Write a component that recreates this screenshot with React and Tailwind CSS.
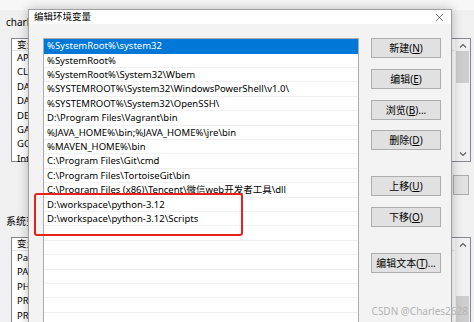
import { X } from 'lucide-react';

const FONT = "font-['Noto_Sans','Noto_Sans_CJK_SC',sans-serif]";

const PATHS = [
  '%SystemRoot%\\system32',
  '%SystemRoot%',
  '%SystemRoot%\\System32\\Wbem',
  '%SYSTEMROOT%\\System32\\WindowsPowerShell\\v1.0\\',
  '%SYSTEMROOT%\\System32\\OpenSSH\\',
  'D:\\Program Files\\Vagrant\\bin',
  '%JAVA_HOME%\\bin;%JAVA_HOME%\\jre\\bin',
  '%MAVEN_HOME%\\bin',
  'C:\\Program Files\\Git\\cmd',
  'C:\\Program Files\\TortoiseGit\\bin',
  'C:\\Program Files (x86)\\Tencent\\微信web开发者工具\\dll',
  'D:\\workspace\\python-3.12',
  'D:\\workspace\\python-3.12\\Scripts',
];

const USER_VARS = ['APPDATA', 'CLASSPATH', 'DATA_HOME', 'DATAGRIP', 'DEVECO', 'GATEWAY', 'GOLAND', 'IntelliJ IDEA'];
const SYS_VARS = ['Path', 'PATHEXT', 'PHP_HOME', 'PROCESSOR_ARCHITECTURE', 'PROCESSOR_IDENTIFIER'];

const BUTTONS = [
  { pre: '新建(', key: 'N', post: ')', mt: 'mt-0' },
  { pre: '编辑(', key: 'E', post: ')', mt: 'mt-[11px]' },
  { pre: '浏览(', key: 'B', post: ')...', mt: 'mt-[11px]' },
  { pre: '删除(', key: 'D', post: ')', mt: 'mt-[10px]' },
  { pre: '上移(', key: 'U', post: ')', mt: 'mt-[26px]' },
  { pre: '下移(', key: 'O', post: ')', mt: 'mt-[11px]' },
  { pre: '编辑文本(', key: 'T', post: ')...', mt: 'mt-[26px]' },
];

function Chevron({ up }) {
  return (
    <svg width="8" height="5" viewBox="0 0 8 5" className="block">
      <path d={up ? 'M1 4.5 L4 1.5 L7 4.5' : 'M1 0.5 L4 3.5 L7 0.5'} fill="none" stroke="#606060" strokeWidth="1.2" />
    </svg>
  );
}

function ParentList({ items, height, thumbTop, thumbBottom }) {
  return (
    <div className={`ml-[11px] w-[460px] ${height} border border-[#828790] bg-white flex`}>
      <div className="flex-1 flex flex-col">
        <div className="h-[13px] leading-[11px] pl-[5px] border-b border-[#e5e5e5] flex">
          <span className="w-[70px] border-r border-[#e5e5e5]">变量</span>
          <span className="pl-[5px]">值</span>
        </div>
        {items.map((v, i) => (
          <div key={i} className="h-[14.4px] leading-[14.4px] pl-[5px] whitespace-nowrap">{v}</div>
        ))}
      </div>
      <div className="w-[15px] bg-[#f0f0f0] flex flex-col items-center">
        <div className="h-[12px] flex items-center"><Chevron up /></div>
        {thumbTop}
        {thumbBottom}
      </div>
    </div>
  );
}

export default function App() {
  return (
    <div className={`w-[474px] h-[322px] relative overflow-hidden bg-[#f0f0f0] text-black text-[9.5px] ${FONT}`}>
      {/* Parent window: 环境变量 */}
      <div className="h-[10px] bg-[#f7f7f7]" />
      <div className="pl-[6px] mt-[6px] h-[12px] leading-[12px] text-[10px]">charles 的用户变量(U)</div>
      <div className="mt-[10px]">
        <ParentList
          items={USER_VARS}
          height="h-[124px]"
          thumbTop={<div className="w-[13px] h-[32px] bg-[#cdcdcd]" />}
          thumbBottom={<div className="mt-auto h-[14px] flex items-center"><Chevron /></div>}
        />
      </div>
      <div className="mt-[13px] h-[20px] flex justify-end pr-[5px] gap-[8px]">
        <div className="w-[74px] h-[20px] bg-[#e1e1e1] border border-[#adadad]" />
        <div className="w-[74px] h-[20px] bg-[#e1e1e1] border border-[#adadad]" />
        <div className="w-[16px] h-[20px] bg-[#e1e1e1] border border-[#adadad]" />
      </div>
      <div className="pl-[6px] mt-[20px] h-[12px] leading-[12px] text-[10px]">系统变量(S)</div>
      <div className="mt-[10px]">
        <ParentList
          items={SYS_VARS}
          height="h-[100px]"
          thumbTop={<div className="mt-[46px] w-[13px] h-[40px] bg-[#cdcdcd]" />}
          thumbBottom={null}
        />
      </div>

      {/* Dialog: 编辑环境变量 */}
      <div className="absolute left-[28px] top-[9px] w-[424px] h-[330px] border border-[#a0a0a0] bg-[#f3f3f3] shadow-[0_0_10px_rgba(0,0,0,0.25)] flex flex-col">
        <div className="h-[24px] bg-white flex items-center pl-[5px] text-[9.5px]">
          <span>编辑环境变量</span>
          <X size={13} strokeWidth={1.2} className="ml-auto mr-[5px] text-[#333]" />
        </div>
        <div className="flex pl-[14px] pt-[14px] relative">
          <div className="w-[316px] h-[300px] bg-white border border-[#adadad] overflow-hidden">
            {PATHS.map((p, i) => (
              <div
                key={i}
                className={`h-[14.4px] leading-[14px] pl-[3px] whitespace-nowrap border-b ${
                  i === 0 ? 'bg-[#0078d7] text-white border-[#0078d7]' : 'border-[#f0f0f0]'
                }`}
              >
                {p}
              </div>
            ))}
            {Array.from({ length: 8 }).map((_, i) => (
              <div key={`e${i}`} className="h-[14.4px] border-b border-[#f0f0f0]" />
            ))}
          </div>
          <div className="ml-[12px] w-[70px] flex flex-col">
            {BUTTONS.map(b => (
              <div
                key={b.key}
                className={`${b.mt} h-[20px] bg-[#e1e1e1] border border-[#adadad] flex items-center justify-center text-[10px]`}
              >
                {b.pre}<span className="underline">{b.key}</span>{b.post}
              </div>
            ))}
          </div>
          {/* red highlight annotation */}
          <div className="absolute left-[5px] top-[169px] w-[209px] h-[43px] border-2 border-[#e5231b] rounded-[3px]" />
        </div>
      </div>

      {/* watermark */}
      <div className="absolute right-[6px] bottom-[3px] text-[10px] text-[#b4b4b4]">CSDN @Charles2628</div>
    </div>
  );
}
